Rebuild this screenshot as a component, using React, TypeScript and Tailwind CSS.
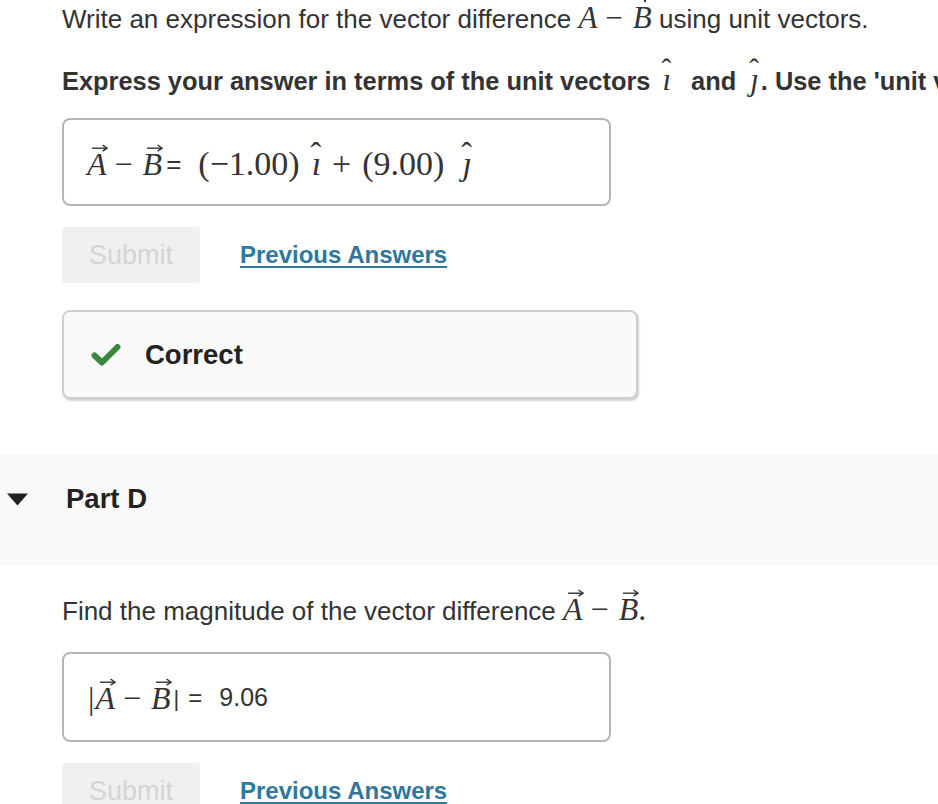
import React from "react";

const serif = "font-['Liberation_Serif','DejaVu_Serif',serif]";

function Arrow() {
  return (
    <svg width="17" height="8" viewBox="0 0 17 8" className="absolute left-1/2 -translate-x-[35%] -top-[4px]" fill="none">
      <path d="M1 4.2 H15" stroke="#333" strokeWidth="1.4" />
      <path d="M11.5 1 L16 4.2 L11.5 7.2" stroke="#333" strokeWidth="1.4" fill="none" />
    </svg>
  );
}

function Vec({ ch }: { ch: string }) {
  return (
    <span className="relative inline-block italic leading-none">
      <Arrow />
      {ch}
    </span>
  );
}

function Hat({ ch }: { ch: string }) {
  return (
    <span className="relative inline-block italic leading-none">
      <span className="absolute left-[45%] -translate-x-1/2 top-[-0.3em] not-italic text-[0.95em] leading-none">ˆ</span>
      {ch}
    </span>
  );
}

function Minus() {
  return <span className="inline-block not-italic ml-[8px] mr-[10px]">−</span>;
}

function SubmitRow() {
  return (
    <div className="flex items-center">
      <div className="w-[138px] h-[56px] rounded-[4px] bg-[#f0f0f0] flex items-center justify-center text-[27px] text-[#d4d4d4]">
        Submit
      </div>
      <a className="ml-[40px] text-[24px] font-bold text-[#2f779b] underline underline-offset-[3px] decoration-[2px]">
        Previous Answers
      </a>
    </div>
  );
}

export default function App() {
  return (
    <div className="w-[938px] h-[804px] overflow-hidden bg-white font-['Liberation_Sans',Arial,sans-serif] text-[#333]">
      <div className="pl-[62px]">
        <p className="h-[38px] text-[26px] leading-[38px] whitespace-nowrap">
          Write an expression for the vector difference{" "}
          <span className={`${serif} text-[31px] italic leading-none`}>
            A
            <Minus />
            <span className="relative inline-block">
              B<span className="absolute left-[58%] -top-[3px] w-[2px] h-[3px] bg-[#333]" />
            </span>
          </span>{" "}
          using unit vectors.
        </p>
        <p className="mt-[24px] h-[38px] text-[25.4px] leading-[38px] font-bold whitespace-nowrap">
          Express your answer in terms of the unit vectors
          <span className={`${serif} font-normal text-[31px] leading-none ml-[12px] mr-[20px]`}>
            <Hat ch="ı" />
          </span>
          and
          <span className={`${serif} font-normal text-[31px] leading-none ml-[14px] mr-[2px]`}>
            <Hat ch="ȷ" />
          </span>
          . Use the 'unit vectors' button to denote unit vectors.
        </p>
      </div>

      <div className="pl-[62px] pr-0">
        <div className="mt-[18px] w-[549px] h-[88px] rounded-[8px] border-2 border-[#b5b5b5] flex items-center pl-[23px] pt-[4px]">
          <span className={`${serif} text-[32px] whitespace-nowrap leading-none`}>
            <Vec ch="A" />
            <Minus />
            <Vec ch="B" />
          </span>
          <span className="text-[26px] ml-[4px]">=</span>
          <span className={`${serif} text-[34px] ml-[17px] whitespace-nowrap leading-none`}>
            (−1.00)
            <span className="ml-[12px]">
              <Hat ch="ı" />
            </span>
            <span className="mx-[11px]">+</span>
            (9.00)
            <span className="ml-[18px]">
              <Hat ch="ȷ" />
            </span>
          </span>
        </div>

        <div className="mt-[21px]">
          <SubmitRow />
        </div>

        <div className="mt-[27px] w-[576px] h-[89px] rounded-[8px] border-2 border-[#cfcfcf] bg-[#f9f9f9] shadow-[1px_2px_2px_rgba(0,0,0,0.18)] flex items-center pl-[27px]">
          <svg width="30" height="23" viewBox="0 0 30 23" className="mt-[-1px]">
            <path d="M3.5 12.5 L11 19.5 L26.5 4" stroke="#3b873e" strokeWidth="6" strokeLinecap="round" strokeLinejoin="round" fill="none" />
          </svg>
          <span className="ml-[24px] text-[27.5px] font-bold text-[#222]">Correct</span>
        </div>
      </div>

      <div className="mt-[55px] h-[112px] bg-[#f9f9f9] flex items-start pt-[27px]">
        <svg width="22" height="13" viewBox="0 0 22 13" className="ml-[7px] mt-[12px]">
          <path d="M0 0.5 H21 L10.5 12.5 Z" fill="#222" />
        </svg>
        <span className="ml-[37px] text-[27.5px] leading-[36px] font-bold text-[#222]">Part D</span>
      </div>

      <div className="pl-[62px]">
        <p className="mt-[26px] h-[38px] text-[26px] leading-[38px] whitespace-nowrap">
          Find the magnitude of the vector difference{" "}
          <span className={`${serif} text-[32px] leading-none`}>
            <Vec ch="A" />
            <Minus />
            <Vec ch="B" />.
          </span>
        </p>

        <div className="mt-[22px] w-[549px] h-[90px] rounded-[8px] border-2 border-[#b5b5b5] flex items-center pl-[24px] pt-[2px]">
          <span className={`${serif} text-[32px] whitespace-nowrap leading-none`}>
            <span className="not-italic mr-[1px]">|</span>
            <Vec ch="A" />
            <Minus />
            <Vec ch="B" />
          </span>
          <span className="text-[22px] ml-[3px]">|</span>
          <span className="text-[24px] ml-[9px]">=</span>
          <span className="text-[25px] ml-[17px]">9.06</span>
        </div>

        <div className="mt-[21px]">
          <SubmitRow />
        </div>
      </div>
    </div>
  );
}
